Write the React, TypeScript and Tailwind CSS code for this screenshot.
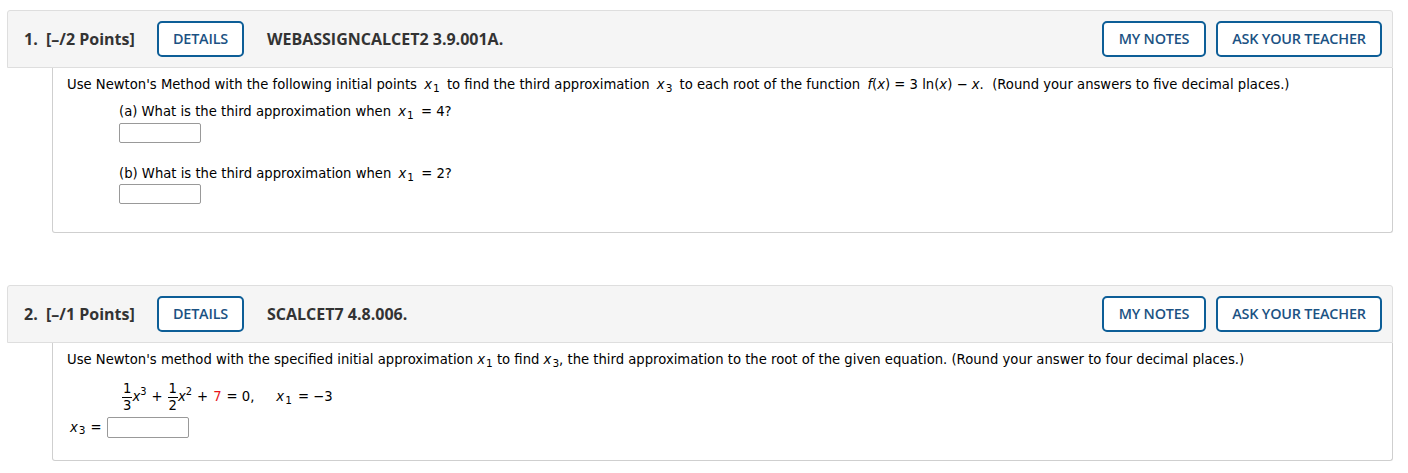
import React from "react";

const head = { fontFamily: '"Open Sans", "Liberation Sans", sans-serif' };
const body = { fontFamily: '"DejaVu Sans", Verdana, sans-serif' };

function Btn({ label, w }: { label: string; w: string }) {
  return (
    <button
      className={`h-[36px] ${w} rounded-[5px] border-2 border-[#0d5e97] bg-white text-[14.4px] font-semibold text-[#1b5283] tracking-[-0.2px]`}
      style={head}
    >
      {label}
    </button>
  );
}

function Header({ num, pts, code }: { num: string; pts: string; code: string }) {
  return (
    <div className="flex h-[58px] items-center rounded-t-[3px] border border-[#dedede] bg-[#f5f5f5] pl-[16px] pr-[10px]" style={head}>
      <span className="w-[133px] text-[16px] font-bold text-[#333]">
        {num}&nbsp; [–/{pts} Points]
      </span>
      <span className="w-[87px]">
        <Btn label="DETAILS" w="w-[87px]" />
      </span>
      <span className="ml-[23px] text-[16px] font-bold text-[#333]">{code}</span>
      <div className="ml-auto flex gap-[10px]">
        <Btn label="MY NOTES" w="w-[104px]" />
        <Btn label="ASK YOUR TEACHER" w="w-[166px]" />
      </div>
    </div>
  );
}

function X({ sub }: { sub: string }) {
  return (
    <span className="italic">
      x<sub className="ml-[1px] not-italic text-[80%]">{sub}</sub>
    </span>
  );
}

function Box({ w = "w-[82px]", h = "h-[20px]" }: { w?: string; h?: string }) {
  return <div className={`${w} ${h} rounded-[2px] border border-[#999] bg-white`} />;
}

function Frac({ n, d }: { n: string; d: string }) {
  return (
    <span className="inline-flex flex-col items-center align-middle leading-[14px]">
      <span className="border-b border-black px-[1px] pb-[1px]">{n}</span>
      <span className="pt-[1px]">{d}</span>
    </span>
  );
}

export default function App() {
  return (
    <div className="w-[1408px] bg-white pl-[7px] pt-[10px] text-black">
      <div className="w-[1386px]">
        <Header num="1." pts="2" code="WEBASSIGNCALCET2 3.9.001A." />
        <div className="ml-[45px] rounded-b-[3px] border-x border-b border-[#cfcfcf] pb-[28px] pl-[14px] pt-[8px] text-[13.2px] leading-[18px]" style={body}>
          <div>
            Use Newton's Method with the following initial points <span className="mx-[3px]"><X sub="1" /></span> to find the third approximation <span className="mx-[3px]"><X sub="3" /></span> to each root of the function <span className="ml-[3px] italic">f</span>(<span className="italic">x</span>) = 3 ln(<span className="italic">x</span>) − <span className="italic">x</span>.&nbsp; (Round your answers to five decimal places.)
          </div>
          <div className="ml-[52px] mt-[9px]">
            (a) What is the third approximation when <span className="mx-[3px]"><X sub="1" /></span> = 4?
          </div>
          <div className="ml-[52px] mt-[2px]">
            <Box />
          </div>
          <div className="ml-[52px] mt-[22px]">
            (b) What is the third approximation when <span className="mx-[3px]"><X sub="1" /></span> = 2?
          </div>
          <div className="ml-[52px] mt-[1px]">
            <Box />
          </div>
        </div>

        <div className="h-[52px]" />

        <Header num="2." pts="1" code="SCALCET7 4.8.006." />
        <div className="ml-[45px] rounded-b-[3px] border-x border-b border-[#cfcfcf] pb-[22px] pl-[14px] pt-[8px] text-[13.2px] leading-[18px]" style={body}>
          <div>
            Use Newton's method with the specified initial approximation <X sub="1" /> to find <X sub="3" />, the third approximation to the root of the given equation. (Round your answer to four decimal places.)
          </div>
          <div className="ml-[55px] mt-[12px] flex h-[32px] items-center">
            <Frac n="1" d="3" />
            <span className="italic">x</span>
            <sup>3</sup>
            <span className="mx-[5px]">+</span>
            <Frac n="1" d="2" />
            <span className="italic">x</span>
            <sup>2</sup>
            <span className="mx-[5px]">+</span>
            <span className="text-[#e8141b]">7</span>
            <span className="ml-[5px]">= 0,</span>
            <span className="ml-[22px]"><X sub="1" /></span>
            <span className="ml-[6px]">= −3</span>
          </div>
          <div className="mt-[4px] flex items-center">
            <span className="ml-[3px]"><X sub="3" /></span>
            <span className="ml-[5px] mr-[5px]">=</span>
            <Box h="h-[21px]" />
          </div>
        </div>
      </div>
    </div>
  );
}
